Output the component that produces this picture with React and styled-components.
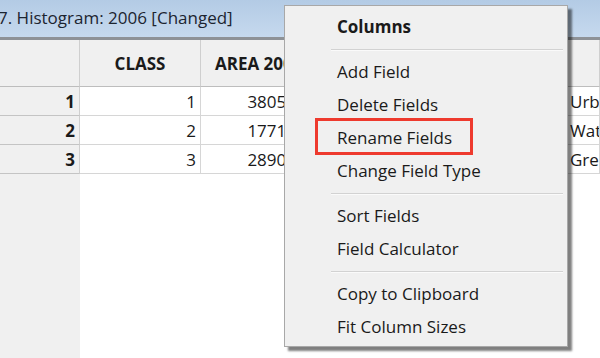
import React from "react";
import styled, { createGlobalStyle } from "styled-components";

const Global = createGlobalStyle`
  html, body { margin: 0; padding: 0; background: #ffffff; }
  body { font-family: "Open Sans", "Noto Sans", "Liberation Sans", sans-serif; }
`;

const Page = styled.div`
  position: relative;
  width: 600px;
  height: 358px;
  overflow: hidden;
  display: flex;
  flex-direction: column;
  background: linear-gradient(to right, #f0f0f0 80px, #ffffff 80px);
`;

const TitleBar = styled.div`
  height: 37px;
  flex: none;
  display: flex;
  align-items: center;
  background: linear-gradient(#b3cbe5, #c6d9ee);
  border-bottom: 3px solid #8e9297;
  box-sizing: content-box;
`;

const Title = styled.span`
  margin-left: -2px;
  font-size: 17px;
  color: #1c2430;
  white-space: nowrap;
  padding-bottom: 2px;
`;

const Grid = styled.div`
  display: grid;
  grid-template-columns: 80px 121px 100px 267px 1fr;
  grid-template-rows: 47px;
  grid-auto-rows: 29px;
`;

const HeadCell = styled.div`
  background: #f0f0f0;
  border-right: 1px solid #cfcfcf;
  border-bottom: 1px solid #bdbdbd;
  display: flex;
  align-items: center;
  justify-content: ${(p) => (p.$align === "left" ? "flex-start" : "center")};
  padding-left: ${(p) => (p.$align === "left" ? "14px" : "0")};
  font-weight: 700;
  font-size: 17px;
  color: #1a1a1a;
  white-space: nowrap;
  overflow: hidden;
  box-sizing: border-box;
`;

const RowHead = styled.div`
  background: #f0f0f0;
  border-right: 1px solid #cfcfcf;
  border-bottom: 1px solid #c4c4c4;
  display: flex;
  align-items: center;
  justify-content: flex-end;
  padding-right: 4px;
  font-weight: 700;
  font-size: 17px;
  color: #1a1a1a;
  box-sizing: border-box;
`;

const Cell = styled.div`
  background: #ffffff;
  border-right: 1px solid #d6d6d6;
  border-bottom: 1px solid #d6d6d6;
  display: flex;
  align-items: center;
  justify-content: ${(p) => (p.$align === "left" ? "flex-start" : "flex-end")};
  padding: ${(p) => (p.$align === "left" ? "0 0 0 2px" : "0 4px 0 0")};
  font-size: 17px;
  color: #1a1a1a;
  white-space: nowrap;
  overflow: hidden;
  box-sizing: border-box;
`;

const Menu = styled.div`
  position: absolute;
  left: 284px;
  top: 5px;
  width: 284px;
  height: 342px;
  box-sizing: border-box;
  background: #f0f0f0;
  border: 1px solid #a8a8a8;
  box-shadow: 4px 4px 2px rgba(0, 0, 0, 0.5);
  padding: 4px 0 3px 0;
  display: flex;
  flex-direction: column;
`;

const Item = styled.div`
  height: 33px;
  flex: none;
  display: flex;
  align-items: center;
  padding-left: 52px;
  font-size: 17px;
  font-weight: ${(p) => (p.$bold ? 700 : 400)};
  color: #1a1a1a;
  white-space: nowrap;
`;

const Separator = styled.div`
  height: 12px;
  flex: none;
  display: flex;
  align-items: center;
  padding: 0 4px 0 46px;
  &::after {
    content: "";
    flex: 1;
    height: 1px;
    background: #d2d2d2;
    box-shadow: 0 1px 0 #fafafa;
  }
`;

const Highlight = styled.div`
  position: absolute;
  left: 30px;
  top: 112px;
  width: 158px;
  height: 37px;
  box-sizing: border-box;
  border: 3px solid #ee3a2e;
  pointer-events: none;
`;

const rows = [
  { n: 1, cls: 1, area: "38056", name: "Urban" },
  { n: 2, cls: 2, area: "17716", name: "Water" },
  { n: 3, cls: 3, area: "28906", name: "Green" },
];

export default function App() {
  return (
    <>
      <Global />
      <Page>
        <TitleBar>
          <Title>7. Histogram: 2006 [Changed]</Title>
        </TitleBar>
        <Grid>
          <HeadCell />
          <HeadCell>CLASS</HeadCell>
          <HeadCell $align="left">AREA 2006</HeadCell>
          <HeadCell />
          <HeadCell />
          {rows.map((r) => (
            <React.Fragment key={r.n}>
              <RowHead>{r.n}</RowHead>
              <Cell>{r.cls}</Cell>
              <Cell>{r.area}</Cell>
              <Cell />
              <Cell $align="left">{r.name}</Cell>
            </React.Fragment>
          ))}
        </Grid>
        <Menu>
          <Item $bold>Columns</Item>
          <Separator />
          <Item>Add Field</Item>
          <Item>Delete Fields</Item>
          <Item>Rename Fields</Item>
          <Item>Change Field Type</Item>
          <Separator />
          <Item>Sort Fields</Item>
          <Item>Field Calculator</Item>
          <Separator />
          <Item>Copy to Clipboard</Item>
          <Item>Fit Column Sizes</Item>
          <Highlight />
        </Menu>
      </Page>
    </>
  );
}
